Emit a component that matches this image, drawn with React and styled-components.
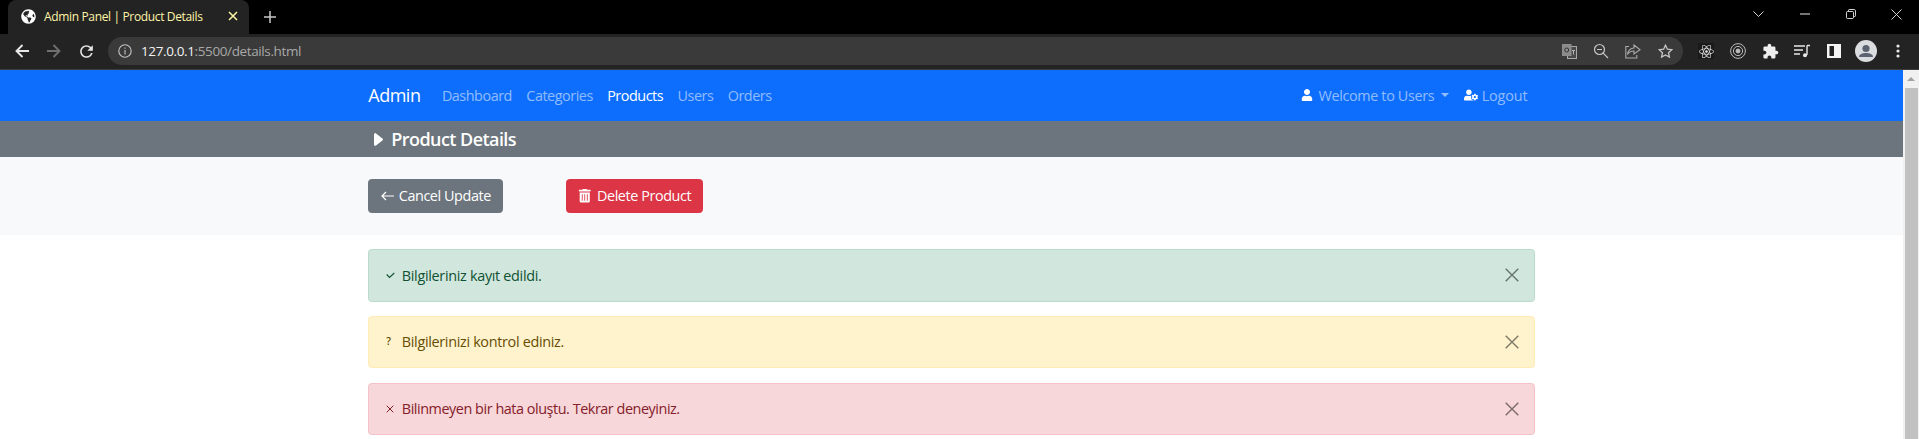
import React from "react";
import styled, { createGlobalStyle } from "styled-components";
import { FaGlobeAmericas, FaUser, FaUserCog, FaTrashAlt, FaReact } from "react-icons/fa";

const Global = createGlobalStyle`
  html, body { margin: 0; padding: 0; height: 439px; overflow: hidden; background: #fff; }
  #root { height: 439px; }
  * { box-sizing: border-box; }
`;

const Shell = styled.div`
  width: 1919px; height: 439px; display: flex; flex-direction: column; overflow: hidden;
  font-family: "Open Sans", "Noto Sans", sans-serif;
`;
const TabStrip = styled.div`
  height: 34px; flex: none; background: #000; display: flex; align-items: flex-end; padding-left: 8px;
`;
const Tab = styled.div`
  width: 241px; height: 34px; background: #232323; border-radius: 8px 8px 0 0; display: flex; align-items: center;
  padding: 0 11px 2px 13px; gap: 8px; color: #fff;
`;
const TabTitle = styled.span`
  flex: 1; font-size: 12px; letter-spacing: -.35px; color: #fff5a8; white-space: nowrap;
`;
const NewTab = styled.div`
  margin: 0 0 0 15px; height: 34px; display: flex; align-items: center; color: #c7c7c7;
`;
const WinControls = styled.div`
  margin-left: auto; display: flex; height: 28px; align-items: center; align-self: flex-start;
`;
const WinBtn = styled.div`
  width: 46px; display: flex; justify-content: center; align-items: center; color: #e8e8e8;
  padding-left: ${p => p.$nudge || 0}px;
`;
const Toolbar = styled.div`
  height: 36px; flex: none; background: #232323; border-bottom: 1px solid #3c3c3c; display: flex; align-items: center;
  padding: 0 0 1px 0;
`;
const NavIcon = styled.div`
  width: 32px; display: flex; justify-content: center; align-items: center; color: ${p => p.$dim ? "#6f6f6f" : "#e8e8e8"};
`;
const NavIcons = styled.div`
  display: flex; padding-left: 6px; width: 108px; flex: none;
`;
const Omni = styled.div`
  width: 1575px; height: 28px; flex: none; background: #3a3a3a; border-radius: 14px; display: flex; align-items: center; padding-left: 10px;
`;
const Url = styled.span`
  margin-left: 9px; font-size: 13.5px; letter-spacing: -.38px; color: #a8a8a8; flex: 1;
  b { font-weight: 400; color: #f2f2f2; }
`;
const OmniIcons = styled.div`
  display: flex; padding-right: 2px;
`;
const ExtIcons = styled.div`
  display: flex; margin-left: 7px;
`;
const AtomTile = styled.div`
  width: 16px; height: 16px; background: #1a1a1a; display: flex; align-items: center; justify-content: center;
`;
const Viewport = styled.div`
  flex: 1; display: flex; min-height: 0;
`;
const Page = styled.div`
  flex: 1; min-width: 0; overflow: hidden; font-size: 14.4px; line-height: 1.5;
`;
const ScrollTrack = styled.div`
  width: 16px; flex: none; background: #f1f1f1; display: flex; flex-direction: column; align-items: center;
`;
const ScrollArrow = styled.div`
  height: 18px; flex: none; display: flex; align-items: center; justify-content: center;
  &::before { content: ""; border: 4px solid transparent; border-top: 0; border-bottom: 4px solid #a3a3a3; }
`;
const ScrollThumb = styled.div`
  width: 13px; flex: 1; background: #c1c1c1;
`;
const Container = styled.div`
  width: 1188px; margin: 0 auto; padding: 0 10.8px;
  display: flex; align-items: ${p => p.$align || "stretch"}; flex-direction: ${p => p.$dir || "row"};
`;
const TopNav = styled.nav`
  background: #0d6efd; height: 51px; display: flex; align-items: center;
`;
const Brand = styled.span`
  font-size: 18px; color: #fff; margin-right: 14.4px; letter-spacing: -.5px; width: 52px; white-space: nowrap;
`;
const NavList = styled.div`
  display: flex;
`;
const NavLink = styled.span`
  padding: 0 7.2px; font-size: 14.4px; letter-spacing: ${p => p.$ls || "-.47px"}; white-space: nowrap;
  color: ${p => p.$active ? "#fff" : "rgba(255,255,255,.55)"};
  display: inline-flex; align-items: center; gap: ${p => p.$gap || 5}px;
  svg { color: #fff; }
`;
const Caret = styled.span`
  margin-left: 2px; border-top: 4.3px solid; border-left: 4.3px solid transparent; border-right: 4.3px solid transparent;
`;
const NavRight = styled.div`
  display: flex; margin-left: auto;
`;
const HeaderBand = styled.header`
  background: #6c757d; height: 36px; display: flex; align-items: center; color: #fff;
`;
const Heading = styled.h1`
  margin: 0 0 0 6px; font-size: 18px; font-weight: 600; letter-spacing: -.56px; display: flex; align-items: center; gap: 8px; line-height: 1;
`;
const Actions = styled.section`
  background: #f8f9fa; height: 78px; display: flex; align-items: center;
`;
const ActionRow = styled.div`
  display: flex; gap: 63px;
`;
const Button = styled.button`
  height: 34px; width: ${p => p.$w}px; border: 1px solid ${p => p.$bg}; background: ${p => p.$bg}; color: #fff; border-radius: 3.6px;
  font: 400 14.4px/1.5 "Open Sans", sans-serif; letter-spacing: -.42px; display: inline-flex; align-items: center; justify-content: center; gap: 5px; padding: 0;
`;
const Alerts = styled.div`
  display: flex; flex-direction: column; gap: 14.4px; padding-top: 14.4px;
`;
const Alert = styled.div`
  height: 52.2px; border: 1px solid ${p => p.$border}; background: ${p => p.$bg}; color: ${p => p.$color}; border-radius: 3.6px;
  display: flex; align-items: center; padding: 0 15px 0 17px;
`;
const AlertIcon = styled.span`
  width: 16px; flex: none; display: flex; align-items: center;
`;
const AlertMark = styled.span`
  font-size: 10.5px; font-weight: 600;
`;
const AlertText = styled.span`
  flex: 1; margin-left: -.5px; letter-spacing: ${p => p.$ls || "-.45px"};
`;
const Close = styled.span`
  display: flex; color: #000; opacity: .5;
`;

const I = ({ size = 16, children, sw = 1.5, ...r }) => (
  <svg width={size} height={size} viewBox="0 0 16 16" fill="none" stroke="currentColor" strokeWidth={sw} {...r}>{children}</svg>
);

const X = () => <I size={14} viewBox="0 0 14 14" sw={1.4}><path d="M.7.7l12.6 12.6M13.3.7L.7 13.3" /></I>;

const Fill = ({ size, color, d }) => (
  <svg width={size} height={size} viewBox="0 0 24 24" fill={color}><path d={d} /></svg>
);

const App = () => (
  <Shell>
    <Global />
    <TabStrip>
      <Tab>
        <FaGlobeAmericas size={15} />
        <TabTitle>Admin Panel | Product Details</TabTitle>
        <I size={10} viewBox="0 0 10 10" sw={1.5} style={{ color: "#fff5a8" }}><path d="M1 1l8 8M9 1l-8 8" /></I>
      </Tab>
      <NewTab><I size={12} viewBox="0 0 12 12" sw={1.5}><path d="M6 0v12M0 6h12" /></I></NewTab>
      <WinControls>
        <WinBtn><I size={11} viewBox="0 0 11 6" height={6} sw={.9}><path d="M.5.5l5 5 5-5" /></I></WinBtn>
        <WinBtn $nudge={1}><I size={10} viewBox="0 0 10 2" height={2} sw={1}><path d="M0 1h10" /></I></WinBtn>
        <WinBtn $nudge={1}><I size={10} viewBox="0 0 10 10" sw={.9}><path d="M2.5 2V1.2C2.5.8 2.8.5 3.2.5h5c.7 0 1.3.6 1.3 1.3v5c0 .4-.3.7-.7.7H8M1.3 2.5h5.4c.4 0 .8.4.8.8v5.4c0 .4-.4.8-.8.8H1.3c-.4 0-.8-.4-.8-.8V3.3c0-.4.4-.8.8-.8z" /></I></WinBtn>
        <WinBtn><I size={11} viewBox="0 0 11 11" sw={.9}><path d="M.5.5l10 10M10.5.5l-10 10" /></I></WinBtn>
      </WinControls>
    </TabStrip>
    <Toolbar>
      <NavIcons>
        <NavIcon><I size={14} viewBox="0 0 14 14" sw={1.9}><path d="M14 7H1.5M7.5 1L1.5 7l6 6" /></I></NavIcon>
        <NavIcon $dim><I size={14} viewBox="0 0 14 14" sw={1.9}><path d="M0 7h12.5M6.5 1l6 6-6 6" /></I></NavIcon>
        <NavIcon><Fill size={19} color="#e8e8e8" d="M17.65 6.35A7.958 7.958 0 0 0 12 4c-4.42 0-7.99 3.58-7.99 8s3.57 8 7.99 8c3.73 0 6.84-2.55 7.73-6h-2.08A5.99 5.99 0 0 1 12 18c-3.31 0-6-2.69-6-6s2.69-6 6-6c1.66 0 3.14.69 4.22 1.78L13 11h7V4l-2.35 2.35z" /></NavIcon>
      </NavIcons>
      <Omni>
        <I size={14} viewBox="0 0 14 14" sw={1.1} style={{ color: "#c4c4c4" }}><circle cx="7" cy="7" r="6.2" /><path d="M7 6v4.5M7 3.4v1.4" /></I>
        <Url><b>127.0.0.1</b>:5500/details.html</Url>
        <OmniIcons>
          <NavIcon><I size={15} viewBox="0 0 15 15" sw={1} style={{ color: "#a9a9a9" }}><rect x="5.5" y="2.5" width="9" height="12" fill="#4a4a4a" /><rect x=".5" y=".5" width="8.5" height="11" fill="#8c8c8c" stroke="#8c8c8c" /><circle cx="4.7" cy="6" r="2" stroke="#333" /><path d="M10 6.5h3M11.5 6.500v4" stroke="#b5b5b5" /></I></NavIcon>
          <NavIcon><I size={16} viewBox="0 0 16 16" sw={1.2} style={{ color: "#c7c7c7" }}><circle cx="6.5" cy="6.5" r="5" /><path d="M10.2 10.2L15 15M4 6.5h5" /></I></NavIcon>
          <NavIcon><I size={16} viewBox="0 0 16 16" sw={1.1} style={{ color: "#a9a9a9" }}><path d="M9 5V2l6 4.8L9 11V8C6 8 4 9 2.5 11.5 3 8 5 5.2 9 5z" /><path d="M4 3.5H.8v11.5h11V12" /></I></NavIcon>
          <NavIcon><I size={15} viewBox="0 0 15 15" sw={1.3} style={{ color: "#c7c7c7" }}><path d="M7.5 1.2l1.9 4 4.4.5-3.3 3 .9 4.4-3.9-2.2-3.9 2.2.9-4.4-3.3-3 4.4-.5z" /></I></NavIcon>
        </OmniIcons>
      </Omni>
      <ExtIcons>
        <NavIcon><AtomTile><FaReact size={15} color="#e6e6e6" /></AtomTile></NavIcon>
        <NavIcon><I size={16} viewBox="0 0 16 16" sw={1} style={{ color: "#bdbdbd" }}><circle cx="8" cy="8" r="7.4" /><circle cx="8" cy="8" r="4.6" /><circle cx="8" cy="8" r="2" fill="currentColor" /></I></NavIcon>
        <NavIcon><Fill size={17} color="#eeeeee" d="M20.5 11H19V7c0-1.1-.9-2-2-2h-4V3.5C13 2.12 11.88 1 10.5 1S8 2.12 8 3.5V5H4c-1.1 0-1.99.9-1.99 2v3.8H3.5c1.49 0 2.7 1.21 2.7 2.7s-1.21 2.7-2.7 2.7H2V20c0 1.1.9 2 2 2h3.8v-1.5c0-1.49 1.21-2.7 2.7-2.7 1.49 0 2.7 1.21 2.7 2.7V22H17c1.1 0 2-.9 2-2v-4h1.5c1.38 0 2.5-1.12 2.5-2.5S21.88 11 20.5 11z" /></NavIcon>
        <NavIcon><I size={16} viewBox="0 0 16 16" sw={1.4} style={{ color: "#e8e8e8" }}><path d="M0 3h11M0 7h9M0 11h6M13 2.5V12" /><circle cx="11" cy="12.3" r="2" fill="currentColor" stroke="none" /><path d="M13 2.5h3" /></I></NavIcon>
        <NavIcon><I size={14} viewBox="0 0 14 14" sw={0}><path fill="#f4f4f4" fillRule="evenodd" d="M0 0h14v14H0zM2.5 2v10H7V2z" /></I></NavIcon>
        <NavIcon><I size={22} viewBox="0 0 22 22" sw={0}><circle cx="11" cy="11" r="11" fill="#dadce0" /><circle cx="11" cy="8.5" r="3.6" fill="#5b6270" /><path d="M4 17c0-3 3.5-4 7-4s7 1 7 4z" fill="#5b6270" /></I></NavIcon>
        <NavIcon><I size={4} height={14} viewBox="0 0 4 14" sw={0}><circle cx="2" cy="2" r="1.6" fill="#e8e8e8" /><circle cx="2" cy="7" r="1.6" fill="#e8e8e8" /><circle cx="2" cy="12" r="1.6" fill="#e8e8e8" /></I></NavIcon>
      </ExtIcons>
    </Toolbar>
    <Viewport>
      <Page>
        <TopNav>
          <Container $align="center">
            <Brand>Admin</Brand>
            <NavList>
              <NavLink>Dashboard</NavLink>
              <NavLink>Categories</NavLink>
              <NavLink $active>Products</NavLink>
              <NavLink>Users</NavLink>
              <NavLink>Orders</NavLink>
            </NavList>
            <NavRight>
              <NavLink $ls="-.35px"><FaUser size={12} />Welcome to Users<Caret /></NavLink>
              <NavLink $ls="-.12px" $gap={4}><FaUserCog size={14} />Logout</NavLink>
            </NavRight>
          </Container>
        </TopNav>
        <HeaderBand>
          <Container>
            <Heading>
              <I size={9} height={13} viewBox="0 0 9 13" sw={0}><path d="M.8.2c.3-.2.6-.2.9 0l7 5.5c.4.4.4 1.200 0 1.600l-7 5.500c-.3.2-.6.2-.9 0-.5-.2-.8-.6-.8-1V1.200C0 .8.300.4.800.2z" fill="#fff" /></I>
              Product Details
            </Heading>
          </Container>
        </HeaderBand>
        <Actions>
          <Container>
            <ActionRow>
              <Button $bg="#6c757d" $w={135}>
                <I size={13} viewBox="0 0 13 10" height={10} sw={1.2}><path d="M13 5H1M5 1L1 5l4 4" /></I>
                Cancel Update
              </Button>
              <Button $bg="#dc3545" $w={137}><FaTrashAlt size={13.5} />Delete Product</Button>
            </ActionRow>
          </Container>
        </Actions>
        <Container $dir="column">
          <Alerts>
            <Alert $bg="#d1e7dd" $border="#badbcc" $color="#0f5132">
              <AlertIcon><I size={9} viewBox="0 0 9 7" height={7} sw={1.1}><path d="M.7 2.5L3.5 5.5 8.3 1" /></I></AlertIcon>
              <AlertText $ls="-.31px">Bilgileriniz kayıt edildi.</AlertText>
              <Close><X /></Close>
            </Alert>
            <Alert $bg="#fff3cd" $border="#ffecb5" $color="#664d03">
              <AlertIcon><AlertMark>?</AlertMark></AlertIcon>
              <AlertText $ls="-.32px">Bilgilerinizi kontrol ediniz.</AlertText>
              <Close><X /></Close>
            </Alert>
            <Alert $bg="#f8d7da" $border="#f5c2c7" $color="#842029">
              <AlertIcon><I size={8} viewBox="0 0 8 8" sw={1}><path d="M.7.7l6.6 6.6M7.3.7L.7 7.3" /></I></AlertIcon>
              <AlertText>Bilinmeyen bir hata oluştu. Tekrar deneyiniz.</AlertText>
              <Close><X /></Close>
            </Alert>
          </Alerts>
        </Container>
      </Page>
      <ScrollTrack>
        <ScrollArrow />
        <ScrollThumb />
      </ScrollTrack>
    </Viewport>
  </Shell>
);

export default App;
